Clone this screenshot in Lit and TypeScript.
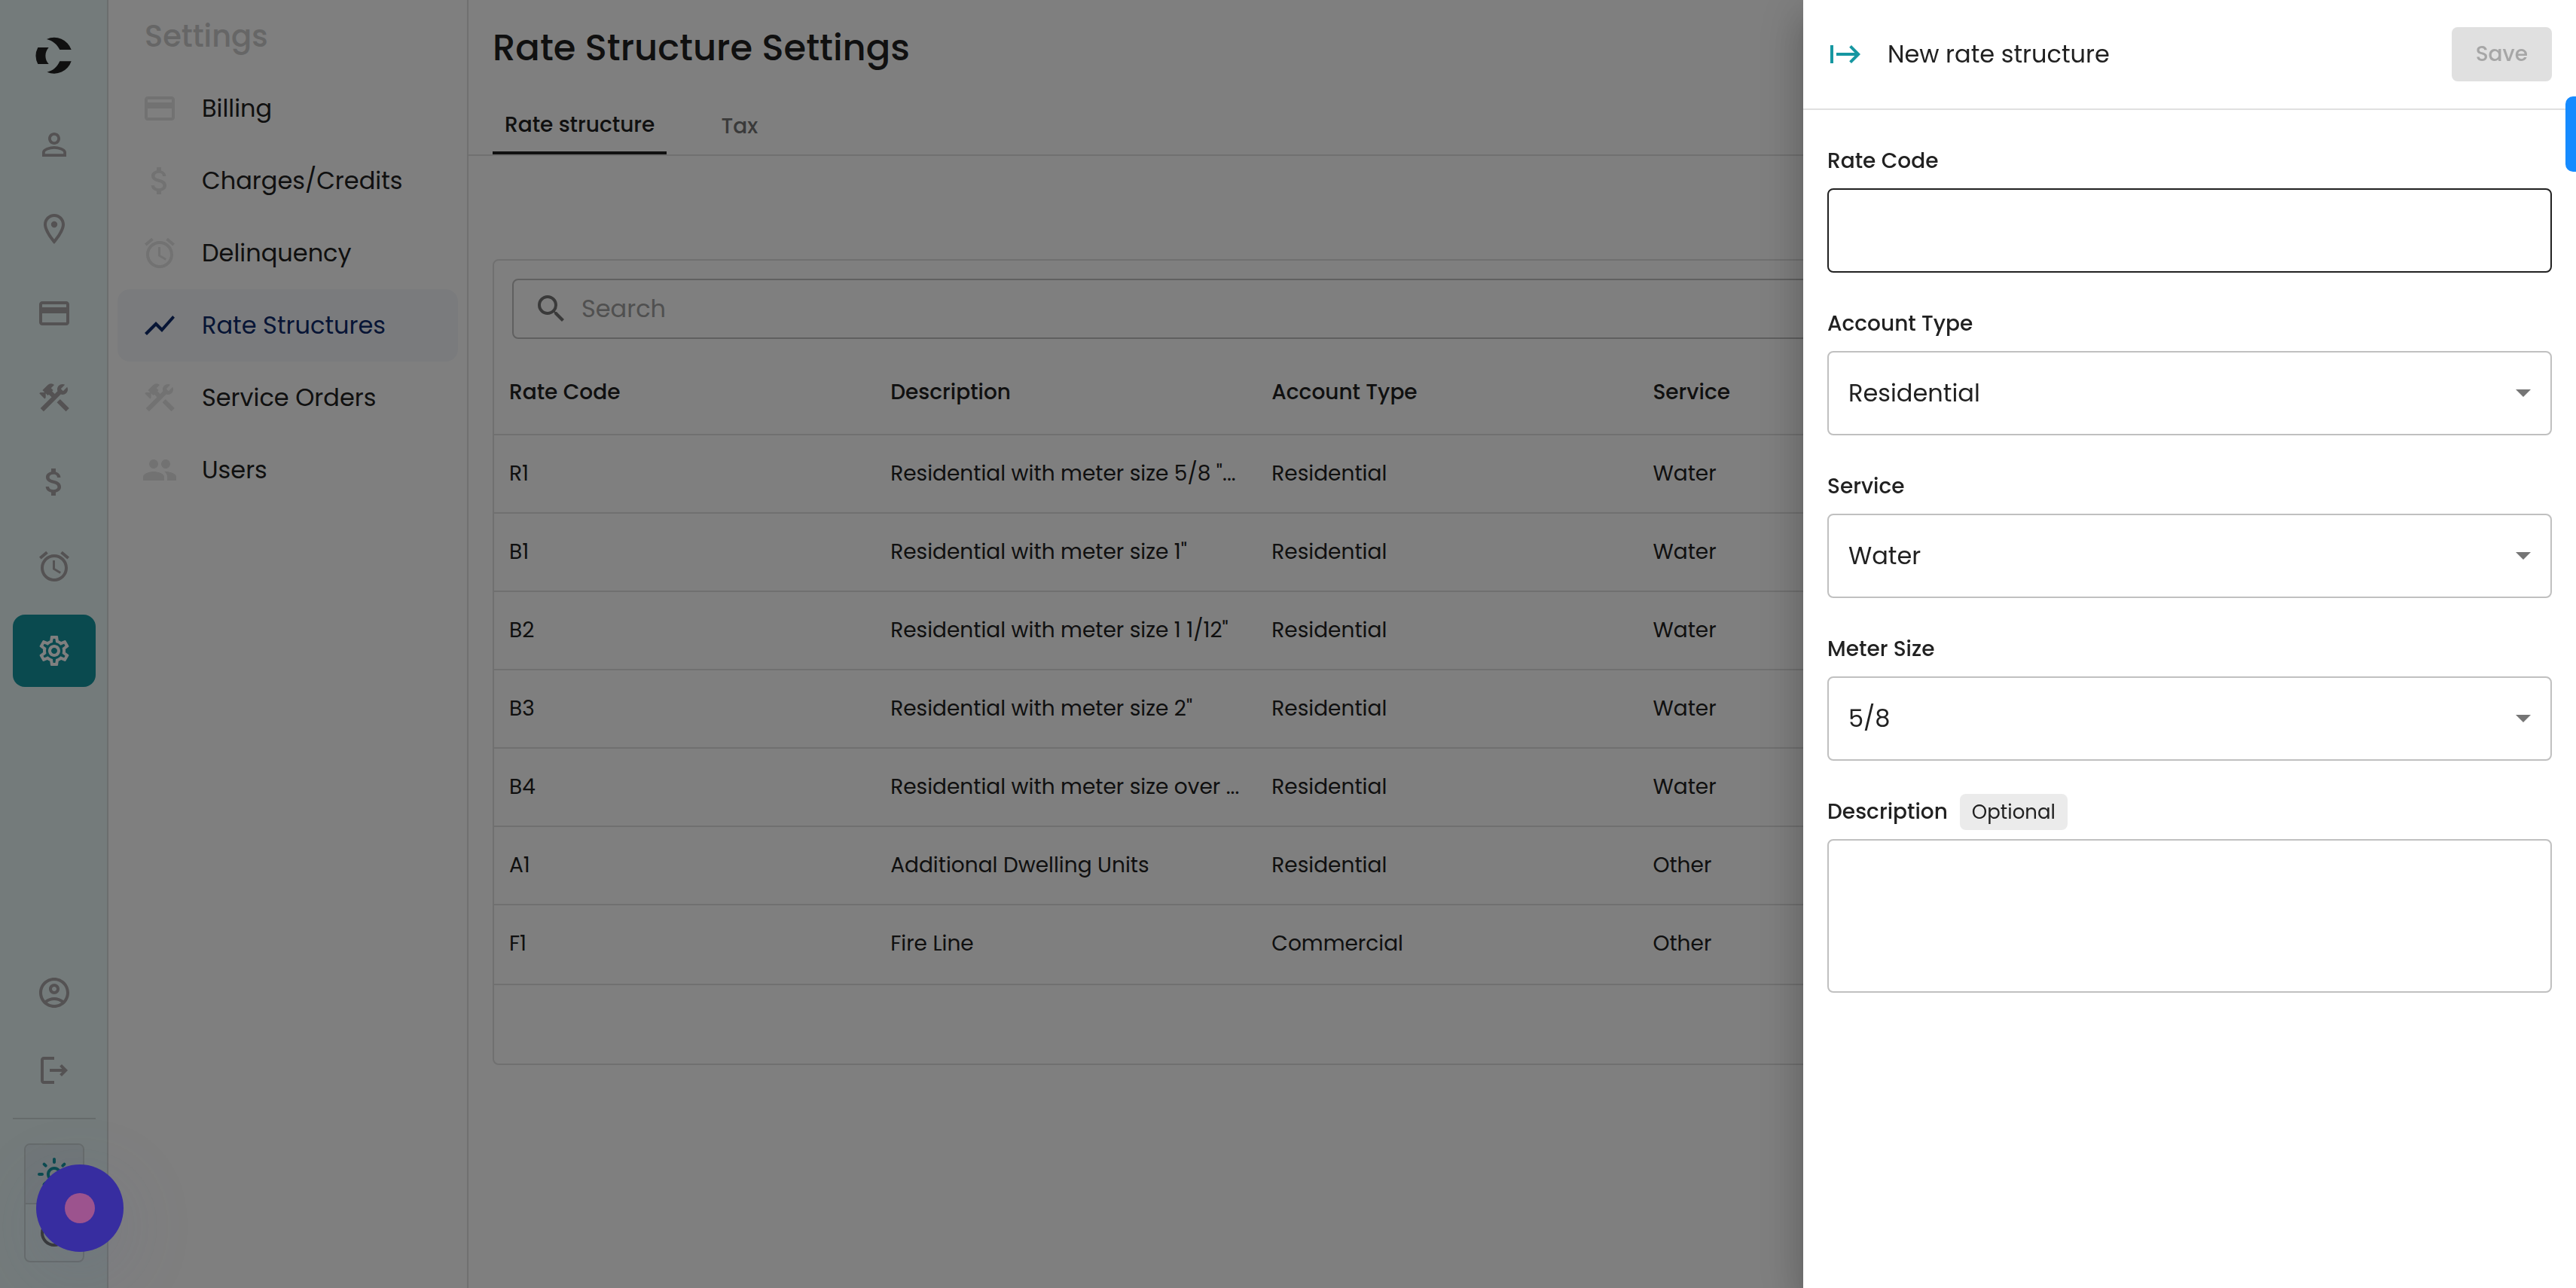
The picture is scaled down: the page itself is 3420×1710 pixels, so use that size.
import { LitElement, html, css, svg } from "lit";
import { customElement } from "lit/decorators.js";
import { classMap } from "lit/directives/class-map.js";

const ICONS: Record<string, string> = {
  person:
    "M12 5.9a2.1 2.1 0 1 1 0 4.2 2.1 2.1 0 0 1 0-4.2m0 9c2.97 0 6.1 1.46 6.1 2.1v1.1H5.9V17c0-.64 3.13-2.1 6.1-2.1M12 4C9.79 4 8 5.79 8 8s1.79 4 4 4 4-1.79 4-4-1.79-4-4-4zm0 9c-2.67 0-8 1.34-8 4v3h16v-3c0-2.66-5.33-4-8-4z",
  place:
    "M12 2C8.13 2 5 5.13 5 9c0 5.25 7 13 7 13s7-7.75 7-13c0-3.87-3.13-7-7-7zM7 9c0-2.76 2.24-5 5-5s5 2.24 5 5c0 2.88-2.88 7.19-5 9.88C9.92 16.21 7 11.85 7 9zm5-2.1a2.1 2.1 0 1 0 0 4.2 2.1 2.1 0 1 0 0-4.2z",
  card: "M20 4H4c-1.11 0-1.99.89-1.99 2L2 18c0 1.11.89 2 2 2h16c1.11 0 2-.89 2-2V6c0-1.11-.89-2-2-2zm0 14H4v-6h16v6zm0-10H4V6h16v2z",
  tools:
    "M13.783 15.172l2.121-2.121 5.996 5.996-2.121 2.121zM17.5 10c1.93 0 3.5-1.57 3.5-3.5 0-.58-.16-1.12-.41-1.6l-2.7 2.7-1.49-1.49 2.7-2.7c-.48-.25-1.02-.41-1.6-.41C15.57 3 14 4.57 14 6.5c0 .41.08.8.21 1.16l-1.85 1.85-1.78-1.78.71-.71-1.41-1.41L12 3.49a3 3 0 0 0-4.24 0L4.22 7.03l1.41 1.41H2.81l-.71.71 3.54 3.54.71-.71V9.15l1.41 1.41.71-.71 1.78 1.78-7.41 7.41 2.12 2.12L16.34 9.79c.36.13.75.21 1.16.21z",
  dollar:
    "M11.8 10.9c-2.27-.59-3-1.2-3-2.15 0-1.09 1.01-1.85 2.7-1.85 1.78 0 2.44.85 2.5 2.1h2.21c-.07-1.72-1.12-3.3-3.21-3.81V3h-3v2.16c-1.94.42-3.5 1.68-3.5 3.61 0 2.31 1.91 3.46 4.7 4.13 2.5.6 3 1.48 3 2.41 0 .69-.49 1.79-2.7 1.79-2.06 0-2.87-.92-2.98-2.1h-2.2c.12 2.19 1.76 3.42 3.68 3.83V21h3v-2.15c1.95-.37 3.5-1.5 3.5-3.55 0-2.84-2.43-3.81-4.7-4.4z",
  alarm:
    "M22 5.72l-4.6-3.86-1.29 1.53 4.6 3.86L22 5.72zM7.88 3.39L6.6 1.86 2 5.71l1.29 1.53 4.59-3.85zM12.5 8H11v6l4.75 2.85.75-1.23-4-2.37V8zM12 4c-4.97 0-9 4.03-9 9s4.02 9 9 9a9 9 0 1 0 0-18zm0 16c-3.87 0-7-3.13-7-7s3.13-7 7-7 7 3.13 7 7-3.13 7-7 7z",
  settings:
    "M19.43 12.98c.04-.32.07-.64.07-.98 0-.34-.03-.66-.07-.98l2.11-1.65c.19-.15.24-.42.12-.64l-2-3.46c-.09-.16-.26-.25-.44-.25-.06 0-.12.01-.17.03l-2.49 1c-.52-.4-1.08-.73-1.69-.98l-.38-2.65C14.46 2.18 14.25 2 14 2h-4c-.25 0-.46.18-.49.42l-.38 2.65c-.61.25-1.17.59-1.69.98l-2.49-1c-.06-.02-.12-.03-.18-.03-.17 0-.34.09-.43.25l-2 3.46c-.13.22-.07.49.12.64l2.11 1.65c-.04.32-.07.65-.07.98 0 .33.03.66.07.98l-2.11 1.65c-.19.15-.24.42-.12.64l2 3.46c.09.16.26.25.44.25.06 0 .12-.01.17-.03l2.49-1c.52.4 1.08.73 1.69.98l.38 2.65c.03.24.24.42.49.42h4c.25 0 .46-.18.49-.42l.38-2.65c.61-.25 1.17-.59 1.69-.98l2.49 1c.06.02.12.03.18.03.17 0 .34-.09.43-.25l2-3.46c.12-.22.07-.49-.12-.64l-2.11-1.65zm-1.98-1.71c.04.31.05.52.05.73 0 .21-.02.43-.05.73l-.14 1.13.89.7 1.08.84-.7 1.21-1.27-.51-1.04-.42-.9.68c-.43.32-.84.56-1.25.73l-1.06.43-.16 1.13-.2 1.35h-1.4l-.19-1.35-.16-1.13-1.06-.43c-.43-.18-.83-.41-1.23-.71l-.91-.7-1.06.43-1.27.51-.7-1.21 1.08-.84.89-.7-.14-1.13c-.03-.31-.05-.54-.05-.74s.02-.43.05-.73l.14-1.13-.89-.7-1.08-.84.7-1.21 1.27.51 1.04.42.9-.68c.43-.32.84-.56 1.25-.73l1.06-.43.16-1.13.2-1.35h1.39l.19 1.35.16 1.13 1.06.43c.43.18.83.41 1.23.71l.91.7 1.06-.43 1.27-.51.7 1.21-1.07.85-.89.7.14 1.13zM12 8c-2.21 0-4 1.79-4 4s1.79 4 4 4 4-1.79 4-4-1.79-4-4-4zm0 6c-1.1 0-2-.9-2-2s.9-2 2-2 2 .9 2 2-.9 2-2 2z",
  account:
    "M12 2C6.48 2 2 6.48 2 12s4.48 10 10 10 10-4.48 10-10S17.52 2 12 2zM7.35 18.5C8.66 17.56 10.26 17 12 17s3.34.56 4.65 1.5C15.34 19.44 13.74 20 12 20s-3.34-.56-4.65-1.5zm10.79-1.38C16.45 15.8 14.32 15 12 15s-4.45.8-6.14 2.12C4.7 15.73 4 13.95 4 12c0-4.42 3.58-8 8-8s8 3.58 8 8c0 1.95-.7 3.73-1.86 5.12zM12 6c-1.93 0-3.5 1.57-3.5 3.5S10.07 13 12 13s3.5-1.57 3.5-3.5S13.93 6 12 6zm0 5c-.83 0-1.5-.67-1.5-1.5S11.17 8 12 8s1.5.67 1.5 1.5S12.83 11 12 11z",
  logout:
    "M5 5h7V3H5c-1.1 0-2 .9-2 2v14c0 1.1.9 2 2 2h7v-2H5V5zm16 7l-4-4-1.4 1.4L17.2 11H9v2h8.2l-1.6 1.6L17 16l4-4z",
  sun: "M12 9c1.65 0 3 1.35 3 3s-1.35 3-3 3-3-1.35-3-3 1.35-3 3-3m0-2c-2.76 0-5 2.24-5 5s2.24 5 5 5 5-2.24 5-5-2.24-5-5-5zM2 13h2c.55 0 1-.45 1-1s-.45-1-1-1H2c-.55 0-1 .45-1 1s.45 1 1 1zm18 0h2c.55 0 1-.45 1-1s-.45-1-1-1h-2c-.55 0-1 .45-1 1s.45 1 1 1zM11 2v2c0 .55.45 1 1 1s1-.45 1-1V2c0-.55-.45-1-1-1s-1 .45-1 1zm0 18v2c0 .55.45 1 1 1s1-.45 1-1v-2c0-.55-.45-1-1-1s-1 .45-1 1zM5.99 4.58a.996.996 0 0 0-1.41 1.41l1.06 1.06a.996.996 0 1 0 1.41-1.41L5.99 4.58zm12.37 12.37a.996.996 0 0 0-1.41 1.41l1.06 1.06a.996.996 0 1 0 1.41-1.41l-1.06-1.06zm1.06-10.96a.996.996 0 0 0-1.41-1.41l-1.06 1.06a.996.996 0 1 0 1.41 1.41l1.06-1.06zM7.05 18.36a.996.996 0 0 0-1.41-1.41l-1.06 1.06a.996.996 0 1 0 1.41 1.41l1.06-1.06z",
  moon: "M9.37 5.51c-.18.64-.27 1.31-.27 1.99 0 4.08 3.32 7.4 7.4 7.4.68 0 1.35-.09 1.99-.27C17.45 17.19 14.93 19 12 19c-3.86 0-7-3.14-7-7 0-2.93 1.81-5.45 4.37-6.49zM12 3c-4.97 0-9 4.03-9 9s4.03 9 9 9 9-4.03 9-9c0-.46-.04-.92-.1-1.36-.98 1.37-2.58 2.26-4.4 2.26-2.98 0-5.4-2.42-5.4-5.4 0-1.81.89-3.42 2.26-4.4C12.92 3.04 12.46 3 12 3z",
  chart: "M3.5 18.49l6-6.01 4 4L22 6.92l-1.41-1.41-7.09 7.97-4-4L2 16.99z",
  people:
    "M16 11c1.66 0 2.99-1.34 2.99-3S17.66 5 16 5s-3 1.34-3 3 1.34 3 3 3zm-8 0c1.66 0 2.99-1.34 2.99-3S9.66 5 8 5 5 6.34 5 8s1.34 3 3 3zm0 2c-2.33 0-7 1.17-7 3.5V19h14v-2.5c0-2.33-4.67-3.5-7-3.5zm8 0c-.29 0-.62.02-.97.05 1.16.84 1.97 1.97 1.97 3.45V19h6v-2.5c0-2.33-4.67-3.5-7-3.5z",
  search:
    "M15.5 14h-.79l-.28-.27A6.471 6.471 0 0 0 16 9.5 6.5 6.5 0 1 0 9.5 16c1.61 0 3.09-.59 4.23-1.57l.27.28v.79l5 4.99L20.49 19l-4.99-5zm-6 0C7.01 14 5 11.99 5 9.5S7.01 5 9.5 5 14 7.01 14 9.5 11.99 14 9.5 14z",
  start: "M14.59 7.41L18.17 11H6v2h12.17l-3.59 3.59L16 18l6-6-6-6-1.41 1.41zM2 6v12h2V6H2z",
};

const icon = (name: string) =>
  html`<svg class="icon" viewBox="0 0 24 24" aria-hidden="true">${svg`<path d=${ICONS[name]}></path>`}</svg>`;

const RAIL = [
  { icon: "person", label: "Customers" },
  { icon: "place", label: "Locations" },
  { icon: "card", label: "Billing" },
  { icon: "tools", label: "Service orders" },
  { icon: "dollar", label: "Payments" },
  { icon: "alarm", label: "Delinquency" },
  { icon: "settings", label: "Settings", active: true },
];

const MENU = [
  { icon: "card", label: "Billing" },
  { icon: "dollar", label: "Charges/Credits" },
  { icon: "alarm", label: "Delinquency" },
  { icon: "chart", label: "Rate Structures", active: true },
  { icon: "tools", label: "Service Orders" },
  { icon: "people", label: "Users" },
];

const COLUMNS = ["Rate Code", "Description", "Account Type", "Service"];

const ROWS = [
  ["R1", 'Residential with meter size 5/8 "...', "Residential", "Water"],
  ["B1", 'Residential with meter size 1"', "Residential", "Water"],
  ["B2", 'Residential with meter size 1 1/12"', "Residential", "Water"],
  ["B3", 'Residential with meter size 2"', "Residential", "Water"],
  ["B4", "Residential with meter size over ...", "Residential", "Water"],
  ["A1", "Additional Dwelling Units", "Residential", "Other"],
  ["F1", "Fire Line", "Commercial", "Other"],
];

const SELECTS = [
  { id: "account-type", label: "Account Type", value: "Residential" },
  { id: "service", label: "Service", value: "Water" },
  { id: "meter-size", label: "Meter Size", value: "5/8" },
];

const base = css`
  *,
  *::before,
  *::after {
    box-sizing: border-box;
  }
  button,
  input,
  select,
  textarea {
    font: inherit;
    color: inherit;
    margin: 0;
  }
  a {
    color: inherit;
    text-decoration: none;
  }
  h1,
  h2,
  ul {
    margin: 0;
    padding: 0;
    list-style: none;
  }
  .icon {
    display: block;
    width: 48px;
    height: 48px;
    fill: currentColor;
    flex: none;
  }
`;

@customElement("nav-rail")
export class NavRail extends LitElement {
  static styles = [
    base,
    css`
      :host {
        box-sizing: border-box;
        display: flex;
        flex-direction: column;
        align-items: center;
        width: 144px;
        flex: none;
        padding: 50px 0 34px 2px;
        background: #e9f7f6;
        border-right: 2px solid #d6dcdc;
        color: #a8a4a6;
      }
      .logo {
        display: block;
        width: 48px;
        height: 48px;
        margin-bottom: 46px;
        fill: #212121;
        overflow: visible;
      }
      .items {
        display: flex;
        flex-direction: column;
        gap: 16px;
      }
      .item {
        display: flex;
        align-items: center;
        justify-content: center;
        width: 110px;
        height: 96px;
        border-radius: 16px;
      }
      .item.active {
        background: #14959f;
        color: #ffffff;
      }
      .footer {
        display: flex;
        flex-direction: column;
        align-items: center;
        margin-top: auto;
      }
      .footer .item {
        height: 103px;
      }
      .rule {
        width: 110px;
        height: 2px;
        margin: 12px 0 32px;
        border: 0;
        background: #ccd6d6;
      }
      .toggle {
        display: flex;
        flex-direction: column;
        width: 80px;
        border: 2px solid #ccd6d6;
        border-radius: 8px;
        overflow: hidden;
      }
      .mode {
        display: flex;
        align-items: center;
        justify-content: center;
        height: 75px;
        padding: 0;
        border: 0;
        background: transparent;
        color: #6e6e6e;
      }
      .mode.on {
        height: 79px;
        border-bottom: 2px solid #ccd6d6;
        background: #e0ecf0;
        color: #14959f;
      }
    `,
  ];

  render() {
    return html`
      <svg class="logo" viewBox="0 0 48 48" role="img" aria-label="Home">
        <path d="M14 2A24 24 0 0 1 46.7 16H31.3C28 9 22 4 14 2z"></path>
        <path d="M14.5 45.7A24 24 0 0 0 46.7 31.3H31.3C28 39 22 44 14.500 45.700z"></path>
        <path d="M2.300 13H16.700C11 19 11 29 16.700 35H2.300A24 24 0 0 1 2.300 13z"></path>
      </svg>
      <nav class="items" aria-label="Main">
        ${RAIL.map(
          (r) => html`<a
            href="#"
            class=${classMap({ item: true, active: !!r.active })}
            aria-label=${r.label}
            >${icon(r.icon)}</a
          >`,
        )}
      </nav>
      <div class="footer">
        <a class="item" href="#" aria-label="Account">${icon("account")}</a>
        <a class="item" href="#" aria-label="Log out">${icon("logout")}</a>
        <hr class="rule" />
        <div class="toggle">
          <button class="mode on" aria-label="Light mode">${icon("sun")}</button>
          <button class="mode" aria-label="Dark mode">${icon("moon")}</button>
        </div>
      </div>
    `;
  }
}

@customElement("settings-menu")
export class SettingsMenu extends LitElement {
  static styles = [
    base,
    css`
      :host {
        box-sizing: border-box;
        display: block;
        width: 478px;
        flex: none;
        border-right: 2px solid #e0e0e0;
        background: #ffffff;
        color: #212121;
        font-size: 32px;
      }
      .title {
        height: 96px;
        padding: 20px 48px 0;
        font-size: 40px;
        font-weight: 500;
        line-height: 56px;
        color: #cccccc;
      }
      .list {
        padding: 0 12px;
      }
      .link {
        display: flex;
        align-items: center;
        gap: 32px;
        height: 96px;
        padding: 0 32px;
        border-radius: 16px;
      }
      .link .icon {
        color: #e4e4e4;
      }
      .link.active {
        background: #f5f7fb;
        color: #0e2a6b;
      }
      .link.active .icon {
        color: #0e2a6b;
      }
    `,
  ];

  render() {
    return html`
      <h2 class="title">Settings</h2>
      <ul class="list">
        ${MENU.map(
          (m) => html`<li>
            <a href="#" class=${classMap({ link: true, active: !!m.active })}
              >${icon(m.icon)}<span>${m.label}</span></a
            >
          </li>`,
        )}
      </ul>
    `;
  }
}

@customElement("rate-page")
export class RatePage extends LitElement {
  static styles = [
    base,
    css`
      :host {
        display: block;
        flex: 1;
        min-width: 0;
        background: #ffffff;
        color: #212121;
        font-size: 28px;
      }
      .heading {
        padding: 32px 32px 0;
        font-size: 48px;
        font-weight: 500;
        line-height: 64px;
      }
      .tabs {
        display: flex;
        gap: 56px;
        height: 111px;
        padding: 35px 32px 0;
        border-bottom: 2px solid #e0e0e0;
      }
      .tab {
        display: flex;
        align-items: center;
        justify-content: center;
        padding: 0 16px;
        border: 0;
        background: none;
        font-weight: 500;
        color: #757575;
      }
      .tab.active {
        border-bottom: 4px solid #212121;
        color: #212121;
      }
      .card {
        margin: 137px 32px 0;
        border: 2px solid #e0e0e0;
        border-radius: 8px;
      }
      .search {
        display: flex;
        align-items: center;
        gap: 16px;
        height: 80px;
        margin: 24px 24px 16px;
        padding: 0 26px;
        border: 2px solid #c0c0c0;
        border-radius: 8px;
        color: #757575;
      }
      .search-input {
        flex: 1;
        min-width: 0;
        padding: 0;
        border: 0;
        outline: 0;
        background: none;
        font-size: 32px;
      }
      .search-input::placeholder {
        color: #a0a0a0;
        opacity: 1;
      }
      .table {
        width: 100%;
        table-layout: fixed;
        border-collapse: separate;
        border-spacing: 0;
      }
      .col {
        width: 18.54%;
      }
      th,
      td {
        height: 104px;
        padding: 0 20px;
        border-bottom: 2px solid #e0e0e0;
        text-align: left;
        font-weight: 400;
        white-space: nowrap;
      }
      th {
        height: 112px;
        font-weight: 500;
      }
      tr:last-child td {
        border-bottom-color: transparent;
      }
      .footer {
        height: 106px;
        border-top: 2px solid #e0e0e0;
      }
    `,
  ];

  render() {
    return html`
      <h1 class="heading">Rate Structure Settings</h1>
      <div class="tabs" role="tablist">
        <button class="tab active" role="tab" aria-selected="true">Rate structure</button>
        <button class="tab" role="tab" aria-selected="false">Tax</button>
      </div>
      <section class="card">
        <label class="search"
          >${icon("search")}<input
            class="search-input"
            type="search"
            placeholder="Search"
            aria-label="Search"
        /></label>
        <table class="table">
          <colgroup>
            <col class="col" />
            <col class="col" />
            <col class="col" />
            <col />
          </colgroup>
          <thead>
            <tr>
              ${COLUMNS.map((c) => html`<th scope="col">${c}</th>`)}
            </tr>
          </thead>
          <tbody>
            ${ROWS.map((r) => html`<tr>${r.map((c) => html`<td>${c}</td>`)}</tr>`)}
          </tbody>
        </table>
        <div class="footer"></div>
      </section>
    `;
  }
}

@customElement("rate-drawer")
export class RateDrawer extends LitElement {
  static styles = [
    base,
    css`
      :host {
        display: block;
        background: #ffffff;
        color: #212121;
        font-size: 28px;
      }
      .bar {
        display: flex;
        align-items: center;
        height: 146px;
        padding: 0 32px;
        border-bottom: 2px solid #e0e0e0;
      }
      .back {
        display: flex;
        margin-right: 32px;
        padding: 0;
        border: 0;
        background: none;
        color: #1697a1;
      }
      .title {
        flex: 1;
        font-size: 32px;
        font-weight: 400;
      }
      .save {
        height: 72px;
        padding: 0 32px;
        border: 0;
        border-radius: 8px;
        background: #e0e0e0;
        color: #a6a6a6;
        font-weight: 500;
      }
      .form {
        display: flex;
        flex-direction: column;
        gap: 44px;
        padding: 44px 32px;
      }
      .field {
        display: flex;
        flex-direction: column;
        gap: 12px;
      }
      .caption {
        display: flex;
        align-items: center;
        gap: 16px;
        height: 48px;
        font-weight: 500;
      }
      .chip {
        padding: 0 16px;
        border-radius: 8px;
        background: #ebebeb;
        font-size: 26px;
        font-weight: 400;
        line-height: 48px;
      }
      .control {
        display: block;
        width: 100%;
        height: 112px;
        padding: 0 26px;
        border: 2px solid #c0c0c0;
        border-radius: 8px;
        outline: 0;
        background: #ffffff;
        font-size: 32px;
        appearance: none;
        resize: none;
      }
      .control.focused {
        border-color: #212121;
      }
      .control.area {
        height: 204px;
        padding: 26px;
      }
      .pick {
        display: grid;
        align-items: center;
      }
      .pick > * {
        grid-area: 1 / 1;
      }
      .arrow {
        justify-self: end;
        width: 20px;
        height: 10px;
        margin-right: 28px;
        fill: #757575;
        pointer-events: none;
      }
    `,
  ];

  render() {
    return html`
      <header class="bar">
        <button class="back" aria-label="Close">${icon("start")}</button>
        <h2 class="title">New rate structure</h2>
        <button class="save" disabled>Save</button>
      </header>
      <form class="form">
        <div class="field">
          <label class="caption" for="rate-code">Rate Code</label>
          <input class="control focused" id="rate-code" type="text" />
        </div>
        ${SELECTS.map(
          (s) => html`<div class="field">
            <label class="caption" for=${s.id}>${s.label}</label>
            <div class="pick">
              <select class="control" id=${s.id}>
                <option>${s.value}</option>
              </select>
              <svg class="arrow" viewBox="0 0 20 10" aria-hidden="true"><path d="M0 0h20L10 10z"></path></svg>
            </div>
          </div>`,
        )}
        <div class="field">
          <label class="caption" for="description"
            >Description<span class="chip">Optional</span></label
          >
          <textarea class="control area" id="description"></textarea>
        </div>
      </form>
    `;
  }
}

@customElement("app-root")
export class AppRoot extends LitElement {
  static styles = [
    base,
    css`
      :host {
        display: flex;
        min-height: 100vh;
        font-family: Poppins, Inter, "Liberation Sans", sans-serif;
        line-height: 1.5;
      }
      .backdrop {
        position: fixed;
        inset: 0;
        background: rgba(0, 0, 0, 0.5);
      }
      .recorder {
        position: fixed;
        left: 48px;
        bottom: 48px;
        display: grid;
        place-items: center;
        width: 116px;
        height: 116px;
        padding: 0;
        border: 0;
        border-radius: 50%;
        background: #372da0;
        box-shadow: 0 24px 100px rgba(90, 100, 150, 0.18);
      }
      .dot {
        width: 40px;
        height: 40px;
        border-radius: 50%;
        background: #9c538e;
      }
      .drawer {
        position: fixed;
        top: 0;
        right: 0;
        bottom: 0;
        width: 30%;
        box-shadow:
          0 16px 20px -10px rgba(0, 0, 0, 0.2),
          0 32px 48px 4px rgba(0, 0, 0, 0.14),
          0 12px 60px 10px rgba(0, 0, 0, 0.12);
      }
      .handle {
        position: fixed;
        top: 128px;
        right: 0;
        width: 14px;
        height: 100px;
        padding: 0;
        border: 0;
        border-radius: 10px 0 0 10px;
        background: #168bff;
      }
    `,
  ];

  render() {
    return html`
      <nav-rail></nav-rail>
      <settings-menu></settings-menu>
      <rate-page></rate-page>
      <div class="backdrop"></div>
      <button class="recorder" aria-label="Record"><span class="dot"></span></button>
      <rate-drawer class="drawer"></rate-drawer>
      <button class="handle" aria-label="Open panel"></button>
    `;
  }
}
